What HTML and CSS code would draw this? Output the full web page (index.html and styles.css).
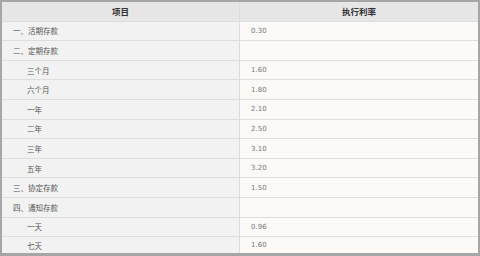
FILE: index.html
```html
<!DOCTYPE html>
<html lang="zh">
<head>
<meta charset="utf-8">
<link rel="stylesheet" href="styles.css">
</head>
<body>
<div class="tbl">
  <div class="row head"><div class="c l">项目</div><div class="c r">执行利率</div></div>
  <div class="row"><div class="c l">一、活期存款</div><div class="c r num">0.30</div></div>
  <div class="row"><div class="c l">二、定期存款</div><div class="c r num"></div></div>
  <div class="row"><div class="c l sub">三个月</div><div class="c r num">1.60</div></div>
  <div class="row"><div class="c l sub">六个月</div><div class="c r num">1.80</div></div>
  <div class="row"><div class="c l sub">一年</div><div class="c r num">2.10</div></div>
  <div class="row"><div class="c l sub">二年</div><div class="c r num">2.50</div></div>
  <div class="row"><div class="c l sub">三年</div><div class="c r num">3.10</div></div>
  <div class="row"><div class="c l sub">五年</div><div class="c r num">3.20</div></div>
  <div class="row"><div class="c l">三、协定存款</div><div class="c r num">1.50</div></div>
  <div class="row"><div class="c l">四、通知存款</div><div class="c r num"></div></div>
  <div class="row"><div class="c l sub">一天</div><div class="c r num">0.96</div></div>
  <div class="row last"><div class="c l sub">七天</div><div class="c r num">1.60</div></div>
</div>
</body>
</html>
```

FILE: styles.css
```css
html, body {
  margin: 0;
  padding: 0;
  background: #ffffff;
}
.tbl {
  box-sizing: border-box;
  width: 480px;
  height: 256px;
  border: 2px solid #a6a6a6;
  border-bottom-width: 3px;
  display: grid;
  grid-template-rows: 18.7px repeat(11, 19.6px) 1fr;
  font-family: "Noto Sans CJK SC", "Noto Sans", sans-serif;
  font-size: 7.5px;
  color: #555;
}
.row {
  display: grid;
  grid-template-columns: 238px 1fr;
  box-sizing: border-box;
  border-top: 1px solid #dddddd;
}
.row.head {
  border-top: none;
}
.c {
  display: flex;
  align-items: center;
  padding-left: 11px;
  box-sizing: border-box;
}
.l {
  background: #f2f2f2;
  border-right: 1px solid #dcdcdc;
}
.r {
  background: #fcf9f6;
  border-top: 0;
}
.sub {
  padding-left: 25px;
}
.num {
  font-family: "DejaVu Sans", sans-serif;
  font-size: 7px;
  color: #777;
}
.head .c {
  background: #e6e6e6;
  justify-content: center;
  padding-left: 0;
  font-weight: bold;
  font-size: 8.5px;
  color: #333;
}
```
